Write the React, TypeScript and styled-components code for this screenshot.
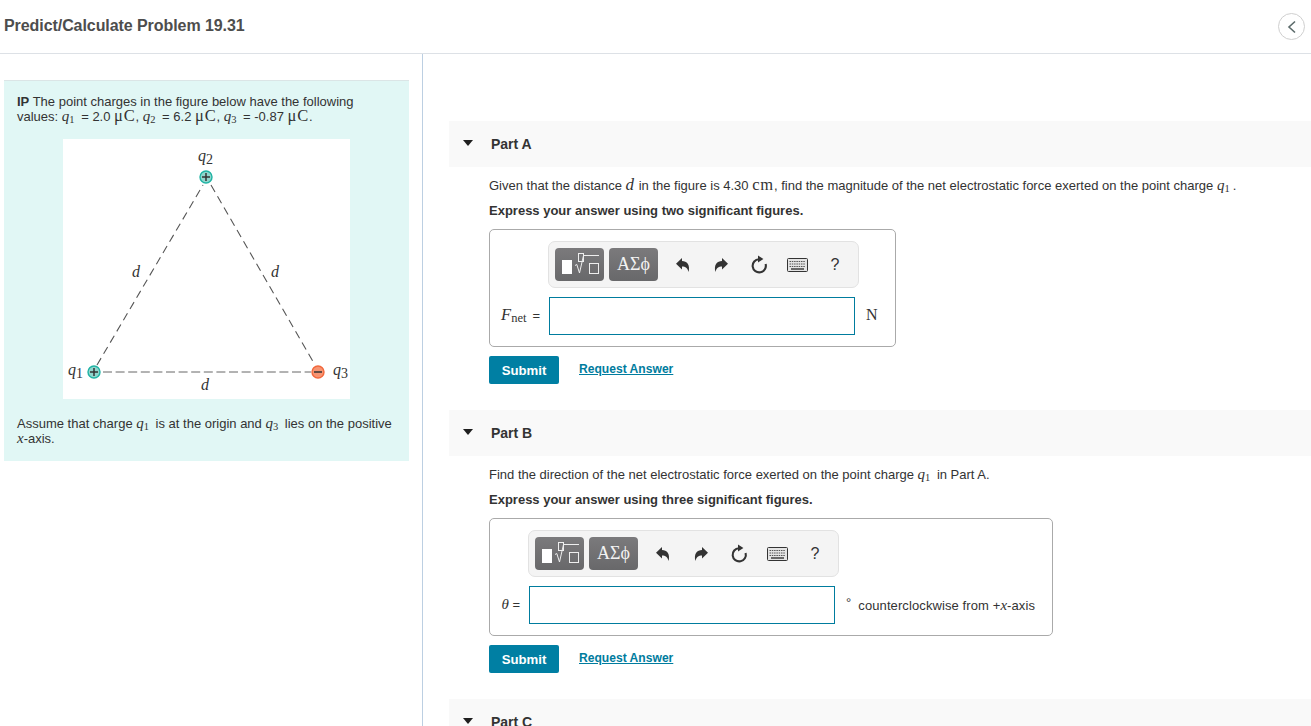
import React from "react";
import styled, { createGlobalStyle } from "styled-components";

const Global = createGlobalStyle`
  html, body { margin: 0; padding: 0; background: #fff; overflow: hidden; }
  body { font-family: "Liberation Sans", Arial, sans-serif; color: #333; }
  #root { height: 726px; overflow: hidden; }
`;

const Page = styled.div`
  display: flex;
  flex-direction: column;
  height: 726px;
`;

const Header = styled.header`
  display: flex;
  align-items: center;
  justify-content: space-between;
  flex: none;
  height: 53px;
  padding: 0 6px 0 4px;
  border-bottom: 1px solid #dde1e6;
`;

const Title = styled.h1`
  margin: 0;
  font-size: 16px;
  font-weight: 700;
  letter-spacing: -0.07px;
  color: #4d4d4d;
  position: relative;
  top: -1px;
`;

const BackButton = styled.div`
  display: flex;
  align-items: center;
  justify-content: center;
  width: 27px;
  height: 27px;
  box-sizing: border-box;
  border: 1px solid #cfcfcf;
  border-radius: 50%;
  color: #5c6b6b;
`;

const Columns = styled.div`
  display: flex;
  flex: 1;
  min-height: 0;
`;

const LeftColumn = styled.aside`
  flex: none;
  width: 423px;
  box-sizing: border-box;
  border-right: 1px solid #bccfe2;
  padding: 26px 13px 0 4px;
`;

const Panel = styled.section`
  background: #e1f7f5;
  border-top: 1px solid #dbe5e6;
  padding: 13px;
  font-size: 13px;
  line-height: 15px;
  height: 381px;
  box-sizing: border-box;
`;

const PanelText = styled.p`
  margin: 0;
`;

const FigureBox = styled.div`
  width: 287px;
  height: 260px;
  margin: 15px 0 17px 46px;
  background: #fff;
  svg { display: block; }
`;

const Serif = styled.span`
  font-family: "Liberation Serif", "Times New Roman", serif;
  font-size: 16.5px;
  letter-spacing: 0.8px;
  line-height: 0;
`;

const MathVar = styled(Serif)`
  font-size: 15px;
  font-style: italic;
  letter-spacing: 0;
  sub {
    font-style: normal;
    font-size: 10.5px;
    line-height: 0;
    vertical-align: -2px;
  }
`;

const ChargeSymbol = styled(MathVar)`
  padding-right: 3px;
`;

const DistanceSymbol = styled(MathVar)`
  font-size: 17px;
  padding-right: 1px;
`;

const NetForceSymbol = styled(MathVar)`
  font-size: 16.5px;
  sub { font-size: 12.5px; }
`;

const RightColumn = styled.main`
  flex: 1;
  min-width: 0;
  padding: 67px 0 0 26px;
`;

const Part = styled.section`
  margin-bottom: 26px;
`;

const PartHeader = styled.div`
  display: flex;
  align-items: center;
  height: 46px;
  background: #f9f9f9;
  padding-left: 14px;
  font-size: 14px;
  font-weight: 700;
  color: #333;
`;

const Caret = styled.span`
  width: 0;
  height: 0;
  border-left: 5.5px solid transparent;
  border-right: 5.5px solid transparent;
  border-top: 6px solid #1f1f1f;
  margin-right: 18px;
  position: relative;
  top: -1px;
`;

const PartBody = styled.div`
  padding-left: 40px;
`;

const Prompt = styled.p`
  margin: 9px 0 0;
  font-size: 13px;
  line-height: 20px;
  color: #333;
`;

const Instruction = styled.p`
  margin: 5px 0 0;
  font-size: 13px;
  line-height: 20px;
  font-weight: 700;
  color: #333;
`;

const AnswerBox = styled.div<{ $width: number }>`
  width: ${(p) => p.$width}px;
  box-sizing: border-box;
  margin-top: 8px;
  padding: 11px 0;
  border: 1px solid #aaa;
  border-radius: 5px;
`;

const Toolbar = styled.div<{ $indent: number }>`
  display: flex;
  align-items: center;
  width: 311px;
  height: 47px;
  box-sizing: border-box;
  margin-left: ${(p) => p.$indent}px;
  padding-left: 6px;
  background: #f4f4f4;
  border: 1px solid #e2e2e2;
  border-radius: 7px;
`;

const TemplateButton = styled.div`
  display: flex;
  align-items: center;
  justify-content: center;
  flex: none;
  width: 49px;
  height: 33px;
  margin-right: 5px;
  border-radius: 4px;
  background: linear-gradient(#7b7a7c, #68686a);
  color: #f2f2f2;
  font-family: "Liberation Serif", serif;
  font-size: 18px;
`;

const ToolIcon = styled.div`
  display: flex;
  align-items: center;
  justify-content: center;
  flex: none;
  width: 38px;
  height: 33px;
  color: #333;
  font-size: 16px;
  &:nth-child(3) { margin-left: 1px; }
`;

const InputRow = styled.div`
  display: flex;
  align-items: center;
  margin-top: 9px;
`;

const RowLabel = styled.div<{ $width: number }>`
  flex: none;
  width: ${(p) => p.$width}px;
  box-sizing: border-box;
  padding-right: 9px;
  text-align: right;
  font-size: 13px;
  white-space: nowrap;
  position: relative;
  top: -1px;
`;

const EqualsGap = styled.span`
  margin-left: 6px;
`;

const AnswerInput = styled.div`
  flex: none;
  width: 306px;
  height: 38px;
  box-sizing: border-box;
  border: 1.5px solid #007c9e;
  background: #fff;
`;

const Unit = styled.div`
  margin-left: 11px;
  font-family: "Liberation Serif", serif;
  font-size: 16px;
  color: #333;
  position: relative;
  top: -1px;
`;

const UnitText = styled.div`
  display: flex;
  align-items: center;
  margin-left: 11px;
  font-size: 13px;
  letter-spacing: 0.1px;
  color: #333;
  white-space: nowrap;
`;

const Degree = styled.span`
  font-size: 13px;
  margin-right: 7px;
  position: relative;
  top: -3px;
`;

const Actions = styled.div`
  display: flex;
  align-items: center;
  margin-top: 9px;
`;

const Submit = styled.div`
  display: flex;
  align-items: center;
  justify-content: center;
  width: 70px;
  height: 28px;
  background: #007fa3;
  border-radius: 2px;
  color: #fff;
  font-size: 13.2px;
  font-weight: 700;
`;

const RequestLink = styled.a`
  margin-left: 20px;
  position: relative;
  top: -1px;
  font-size: 12.1px;
  font-weight: 700;
  color: #007c9e;
  text-decoration: underline;
`;

const MathTemplateIcon = () => (
  <svg width="49" height="33" viewBox="0 0 49 33" fill="none">
    <rect x="7" y="12" width="10" height="14" fill="#fff" />
    <rect x="23.5" y="5.5" width="5" height="8" stroke="#eee" />
    <path d="M20 17.5 L21.8 16.5 L24.5 25 L28.5 7.5 H44" stroke="#eee" strokeWidth="1" />
    <rect x="34.5" y="15.5" width="9" height="10" stroke="#eee" />
  </svg>
);

const ArrowPath = "M1 6.8 L7 1 V4 C11.8 4 15.4 7.6 13.6 15 C12.6 11 10.6 9.4 7 9.4 V12.4 Z";

const UndoIcon = () => (
  <svg width="16" height="16" viewBox="0 0 16 16">
    <path d={ArrowPath} fill="#333" />
  </svg>
);

const RedoIcon = () => (
  <svg width="16" height="16" viewBox="0 0 16 16">
    <g transform="translate(16 0) scale(-1 1)">
      <path d={ArrowPath} fill="#333" />
    </g>
  </svg>
);

const ResetIcon = () => (
  <svg width="18" height="19" viewBox="0 0 18 19" fill="none">
    <path d="M9 4.2 A6.6 6.6 0 1 0 15.6 9" stroke="#333" strokeWidth="2.1" />
    <path d="M8 0.4 L13.4 3.9 L8 7.4 Z" fill="#333" />
  </svg>
);

const KeyboardIcon = () => (
  <svg width="21" height="14" viewBox="0 0 21 14" fill="none">
    <rect x="0.5" y="0.5" width="20" height="13" rx="1" fill="#e4e4e4" stroke="#333" />
    <path d="M2.5 3.5 H18.5 M2.5 6 H18.5 M2.5 8.5 H18.5" stroke="#555" strokeDasharray="1.5 0.8" />
    <path d="M4 11 H17" stroke="#333" strokeWidth="1.4" />
  </svg>
);

const Tools = ({ indent }: { indent: number }) => (
  <Toolbar $indent={indent}>
    <TemplateButton><MathTemplateIcon /></TemplateButton>
    <TemplateButton>ΑΣϕ</TemplateButton>
    <ToolIcon><UndoIcon /></ToolIcon>
    <ToolIcon><RedoIcon /></ToolIcon>
    <ToolIcon><ResetIcon /></ToolIcon>
    <ToolIcon><KeyboardIcon /></ToolIcon>
    <ToolIcon>?</ToolIcon>
  </Toolbar>
);

const Q = ({ n }: { n: number }) => (
  <ChargeSymbol>q<sub>{n}</sub></ChargeSymbol>
);

const FigureLabel = ({ x, y, n }: { x: number; y: number; n?: number }) => (
  <text x={x} y={y} fontFamily="'Liberation Serif', serif" fontSize="16" fill="#333" fontStyle="italic">
    {n ? "q" : "d"}
    {n ? <tspan fontStyle="normal" fontSize="14" dy="3">{n}</tspan> : null}
  </text>
);

const Charge = ({ x, y, positive }: { x: number; y: number; positive: boolean }) => (
  <g>
    <circle
      cx={x}
      cy={y}
      r="6"
      fill={positive ? "#8fd6cd" : "#f79472"}
      stroke={positive ? "#1fb3a4" : "#f2683c"}
      strokeWidth="1.4"
    />
    <path d={`M${x - 4} ${y} H${x + 4}`} stroke="#333" strokeWidth="1.5" />
    {positive ? <path d={`M${x} ${y - 4} V${y + 4}`} stroke="#333" strokeWidth="1.5" /> : null}
  </g>
);

const ChargeFigure = () => (
  <svg width="287" height="260" viewBox="0 0 287 260" fill="none">
    <path d="M34 226 L140 46" stroke="#555" strokeWidth="1.1" strokeDasharray="8 5" />
    <path d="M148 46 L252 226" stroke="#555" strokeWidth="1.1" strokeDasharray="8 5" />
    <path d="M40 233 H248" stroke="#666" strokeWidth="1" strokeDasharray="9 3.6" />
    <Charge x={143} y={38} positive />
    <Charge x={31} y={233} positive />
    <Charge x={255} y={233} positive={false} />
    <FigureLabel x={135} y={22} n={2} />
    <FigureLabel x={5} y={236} n={1} />
    <FigureLabel x={270} y={236} n={3} />
    <FigureLabel x={69} y={138} />
    <FigureLabel x={208} y={138} />
    <FigureLabel x={138} y={251} />
  </svg>
);

export default function App() {
  return (
    <Page>
      <Global />
      <Header>
        <Title>Predict/Calculate Problem 19.31</Title>
        <BackButton>
          <svg width="12" height="14" viewBox="0 0 12 14" fill="none">
            <path d="M9 1.5 L3 7 L9 12.5" stroke="currentColor" strokeWidth="1.6" />
          </svg>
        </BackButton>
      </Header>
      <Columns>
        <LeftColumn>
          <Panel>
            <PanelText>
              <b>IP</b> The point charges in the figure below have the following values: <Q n={1} /> = 2.0 <Serif>μC</Serif>, <Q n={2} /> = 6.2 <Serif>μC</Serif>, <Q n={3} /> = -0.87 <Serif>μC</Serif>.
            </PanelText>
            <FigureBox><ChargeFigure /></FigureBox>
            <PanelText>
              Assume that charge <Q n={1} /> is at the origin and <Q n={3} /> lies on the positive <MathVar>x</MathVar>-axis.
            </PanelText>
          </Panel>
        </LeftColumn>
        <RightColumn>
          <Part>
            <PartHeader><Caret />Part A</PartHeader>
            <PartBody>
              <Prompt>
                Given that the distance <DistanceSymbol>d</DistanceSymbol> in the figure is 4.30 <Serif>cm</Serif>, find the magnitude of the net electrostatic force exerted on the point charge <Q n={1} />.
              </Prompt>
              <Instruction>Express your answer using two significant figures.</Instruction>
              <AnswerBox $width={407}>
                <Tools indent={58} />
                <InputRow>
                  <RowLabel $width={59}>
                    <NetForceSymbol>F<sub>net</sub></NetForceSymbol><EqualsGap>=</EqualsGap>
                  </RowLabel>
                  <AnswerInput />
                  <Unit>N</Unit>
                </InputRow>
              </AnswerBox>
              <Actions>
                <Submit>Submit</Submit>
                <RequestLink>Request Answer</RequestLink>
              </Actions>
            </PartBody>
          </Part>
          <Part>
            <PartHeader><Caret />Part B</PartHeader>
            <PartBody>
              <Prompt>
                Find the direction of the net electrostatic force exerted on the point charge <Q n={1} /> in Part A.
              </Prompt>
              <Instruction>Express your answer using three significant figures.</Instruction>
              <AnswerBox $width={564}>
                <Tools indent={38} />
                <InputRow>
                  <RowLabel $width={39}>
                    <MathVar>θ</MathVar> =
                  </RowLabel>
                  <AnswerInput />
                  <UnitText>
                    <Degree>°</Degree>
                    <span>counterclockwise from +<MathVar>x</MathVar>-axis</span>
                  </UnitText>
                </InputRow>
              </AnswerBox>
              <Actions>
                <Submit>Submit</Submit>
                <RequestLink>Request Answer</RequestLink>
              </Actions>
            </PartBody>
          </Part>
          <Part>
            <PartHeader><Caret />Part C</PartHeader>
          </Part>
        </RightColumn>
      </Columns>
    </Page>
  );
}
